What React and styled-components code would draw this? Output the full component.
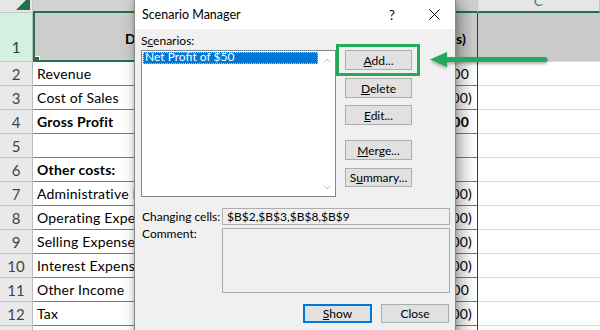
import styled, { createGlobalStyle } from "styled-components";

const GREEN = "#217346";
const ARROW = "#25a85a";

const GlobalStyle = createGlobalStyle`
  html, body { margin: 0; padding: 0; background: #fff; }
  body { width: 600px; height: 330px; overflow: hidden; }
`;

const Page = styled.div`
  position: relative;
  width: 600px;
  height: 330px;
  overflow: hidden;
  font-family: Lato, "Liberation Sans", sans-serif;
`;

const Sheet = styled.div`
  display: flex;
  flex-direction: column;
  margin-top: -8px;
`;

const Row = styled.div`
  display: grid;
  grid-template-columns: 33px 267px 178px 1fr;
  height: ${(p) => p.$h}px;
`;

const Corner = styled.div`
  background: #e6e6e6;
  border-right: 1px solid #c6c6c6;
  border-bottom: 1px solid #c6c6c6;
  box-sizing: border-box;
  position: relative;
  svg { position: absolute; left: 0; top: 0; }
`;

const ColHead = styled.div`
  box-sizing: border-box;
  background: ${(p) => (p.$selected ? "#d2d2d2" : "#e6e6e6")};
  border-right: 1px solid #c6c6c6;
  border-bottom: 2px solid ${GREEN};
  text-align: center;
  font-size: 14px;
  line-height: 16px;
  padding-top: 1px;
  color: #3f7f78;
`;

const RowHead = styled.div`
  box-sizing: border-box;
  display: flex;
  justify-content: center;
  align-items: ${(p) => (p.$active ? "flex-end" : "center")};
  padding-bottom: ${(p) => (p.$active ? 5 : 0)}px;
  background: ${(p) => (p.$active ? "#d3f0e0" : "#e9e9e9")};
  border-right: 1px solid #bdbdbd;
  border-bottom: 1px solid #c6c6c6;
  font-size: 15px;
  color: ${(p) => (p.$active ? "#23402f" : "#444")};
`;

const Cell = styled.div`
  box-sizing: border-box;
  position: relative;
  display: flex;
  align-items: center;
  justify-content: ${(p) => p.$justify || "flex-start"};
  padding: ${(p) => p.$pad || "0 4px"};
  white-space: nowrap;
  overflow: hidden;
  background: ${(p) => (p.$head ? "#cdcdcd" : "#fff")};
  border-right: 1px solid ${(p) => (p.$edge ? "#3a3a3a" : "#7a7a7a")};
  border-bottom: ${(p) => (p.$selected ? `2px solid ${GREEN}` : "1px solid #7a7a7a")};
  border-left: ${(p) => (p.$selectLeft ? `2px solid ${GREEN}` : "none")};
  font-size: 14px;
  letter-spacing: 0.2px;
  font-weight: ${(p) => (p.$bold ? 700 : 400)};
  color: #000;
`;

const Handle = styled.span`
  position: absolute;
  left: -2px;
  bottom: -3px;
  width: 5px;
  height: 5px;
  background: ${GREEN};
  border: 1px solid #fff;
`;

const GridCell = styled.div`
  background: ${(p) => (p.$head ? "#cacaca" : "#fff")};
  border-bottom: 1px solid #dadada;
`;

const Dialog = styled.div`
  position: absolute;
  left: 134px;
  top: -1px;
  width: 322px;
  height: 345px;
  box-sizing: border-box;
  border: 1px solid #8a8a8a;
  background: #f0f0f0;
  box-shadow: 5px 3px 16px rgba(0, 0, 0, 0.38), 0 0 5px rgba(0, 0, 0, 0.18);
  font-family: Lato, "Liberation Sans", sans-serif;
  font-size: 12px;
  color: #000;
  display: flex;
  flex-direction: column;
`;

const TitleBar = styled.div`
  height: 29px;
  background: #fff;
  display: flex;
  align-items: center;
  padding-left: 7px;
`;

const Title = styled.div`
  flex: 1;
  font-size: 12.5px;
`;

const TitleButton = styled.div`
  width: 42px;
  height: 29px;
  display: flex;
  align-items: center;
  justify-content: center;
  font-size: 13px;
`;

const Body = styled.div`
  padding: 5px 5px 0 6px;
  display: flex;
  flex-direction: column;
`;

const Top = styled.div`
  display: grid;
  grid-template-columns: 195px 67px;
  column-gap: 9px;
  row-gap: 2px;
`;

const Label = styled.div`
  line-height: 14px;
`;

const Key = styled.span`
  text-decoration: underline;
`;

const ListBox = styled.div`
  height: 147px;
  box-sizing: border-box;
  border: 1px solid #828790;
  background: #fff;
  display: flex;
`;

const ListItems = styled.div`
  flex: 1;
  padding: 1px 0 0 1px;
`;

const ListItem = styled.div`
  height: 12px;
  box-sizing: border-box;
  line-height: 10px;
  padding-left: 2px;
  background: ${(p) => (p.$selected ? "#0078d7" : "transparent")};
  color: ${(p) => (p.$selected ? "#fff" : "#000")};
  outline: ${(p) => (p.$selected ? "1px dotted #9fd0f5" : "none")};
  outline-offset: -1px;
`;

const ScrollBar = styled.div`
  width: 17px;
  display: flex;
  flex-direction: column;
  justify-content: space-between;
  align-items: center;
  padding: 7px 0 6px;
`;

const ButtonColumn = styled.div`
  display: flex;
  flex-direction: column;
`;

const Button = styled.div`
  box-sizing: border-box;
  width: ${(p) => p.$w || 67}px;
  height: ${(p) => p.$h || 20}px;
  margin-top: ${(p) => p.$gap || 0}px;
  background: #e1e1e1;
  border: ${(p) => (p.$default ? "2px solid #0078d7" : "1px solid #adadad")};
  display: flex;
  align-items: center;
  justify-content: center;
  font-size: 12px;
  position: relative;
`;

const Highlight = styled.div`
  position: absolute;
  top: -7px;
  left: -10px;
  right: -9px;
  bottom: -7px;
  border: 3px solid ${ARROW};
`;

const FieldRow = styled.div`
  display: flex;
  align-items: flex-start;
  margin-top: ${(p) => p.$gap}px;
`;

const FieldLabel = styled.div`
  width: 81px;
  padding-left: 1px;
  box-sizing: border-box;
  line-height: ${(p) => p.$lh || 14}px;
`;

const Field = styled.div`
  box-sizing: border-box;
  width: 228px;
  height: ${(p) => p.$h}px;
  border: 1px solid #adadad;
  background: #f0f0f0;
  padding: 0 4px;
  line-height: 15px;
`;

const Footer = styled.div`
  display: flex;
  justify-content: flex-end;
  gap: 9px;
  margin-top: 11px;
  padding-right: 1px;
`;

const Arrow = styled.svg`
  position: absolute;
  left: 424px;
  top: 48px;
`;

const rows = [
  { n: 2, label: "Revenue", value: "100,000" },
  { n: 3, label: "Cost of Sales", value: "(60,000)", neg: true },
  { n: 4, label: "Gross Profit", value: "40,000", bold: true },
  { n: 5 },
  { n: 6, label: "Other costs:", bold: true },
  { n: 7, label: "Administrative Expenses", value: "(5,000)", neg: true },
  { n: 8, label: "Operating Expenses", value: "(8,000)", neg: true },
  { n: 9, label: "Selling Expenses", value: "(4,000)", neg: true },
  { n: 10, label: "Interest Expenses", value: "(2,000)", neg: true },
  { n: 11, label: "Other Income", value: "1,000" },
  { n: 12, label: "Tax", value: "(3,000)", neg: true },
  { n: 13, label: "Net Profit", value: "19,000", bold: true },
];

const Chevron = ({ up }) => (
  <svg width="8" height="5" viewBox="0 0 8 5">
    <path d={up ? "M0.5 4.5 L4 1 L7.5 4.5" : "M0.5 0.5 L4 4 L7.5 0.5"} fill="none" stroke="#c2c2c2" strokeWidth="1" />
  </svg>
);

export default function App() {
  return (
    <Page>
      <GlobalStyle />
      <Sheet>
        <Row $h={21}>
          <Corner>
            <svg width="33" height="21">
              <polygon points="16,18 30,18 30,4" fill={GREEN} />
            </svg>
          </Corner>
          <ColHead $selected />
          <ColHead $selected />
          <ColHead>C</ColHead>
        </Row>
        <Row $h={49}>
          <RowHead $active>1</RowHead>
          <Cell $head $bold $selectLeft $selected $pad="3px 4px 0 90px">
            Description
            <Handle />
          </Cell>
          <Cell $head $bold $edge $selected $justify="flex-end" $pad="3px 11px 0 4px">
            Amount ($s)
          </Cell>
          <GridCell $head />
        </Row>
        {rows.map((r) => (
          <Row $h={24} key={r.n}>
            <RowHead>{r.n}</RowHead>
            <Cell $bold={r.bold}>{r.label}</Cell>
            <Cell $bold={r.bold} $edge $justify="flex-end" $pad={r.neg ? "0 5px 0 4px" : "0 8px 0 4px"}>
              {r.value}
            </Cell>
            <GridCell />
          </Row>
        ))}
      </Sheet>

      <Dialog>
        <TitleBar>
          <Title>Scenario Manager</Title>
          <TitleButton>?</TitleButton>
          <TitleButton>
            <svg width="11" height="11" viewBox="0 0 11 11">
              <path d="M0.5 0.5 L10.5 10.5 M10.5 0.5 L0.5 10.5" stroke="#000" strokeWidth="1" />
            </svg>
          </TitleButton>
        </TitleBar>
        <Body>
          <Top>
            <Label>
              S<Key>c</Key>enarios:
            </Label>
            <div />
            <ListBox>
              <ListItems>
                <ListItem $selected>Net Profit of $50</ListItem>
              </ListItems>
              <ScrollBar>
                <Chevron up />
                <Chevron />
              </ScrollBar>
            </ListBox>
            <ButtonColumn>
              <Button>
                <span>
                  <Key>A</Key>dd...
                </span>
                <Highlight />
              </Button>
              <Button $gap={8}>
                <span>
                  <Key>D</Key>elete
                </span>
              </Button>
              <Button $gap={7}>
                <span>
                  <Key>E</Key>dit...
                </span>
              </Button>
              <Button $gap={15}>
                <span>
                  <Key>M</Key>erge...
                </span>
              </Button>
              <Button $gap={8} $h={19}>
                <span>
                  S<Key>u</Key>mmary...
                </span>
              </Button>
            </ButtonColumn>
          </Top>
          <FieldRow $gap={11}>
            <FieldLabel $lh={17}>Changing cells:</FieldLabel>
            <Field $h={17}>$B$2,$B$3,$B$8,$B$9</Field>
          </FieldRow>
          <FieldRow $gap={3}>
            <FieldLabel $lh={12}>Comment:</FieldLabel>
            <Field $h={65} />
          </FieldRow>
          <Footer>
            <Button $default $w={69} $h={19}>
              <span>
                <Key>S</Key>how
              </span>
            </Button>
            <Button $w={68} $h={19}>
              Close
            </Button>
          </Footer>
        </Body>
      </Dialog>

      <Arrow width="130" height="26" viewBox="0 0 130 26">
        <defs>
          <filter id="arrowShadow" x="-10%" y="-50%" width="120%" height="200%">
            <feDropShadow dx="0" dy="2" stdDeviation="1.5" floodColor="#000" floodOpacity="0.3" />
          </filter>
        </defs>
        <g filter="url(#arrowShadow)">
          <polygon points="6,11.5 23,4 23,19" fill={ARROW} />
          <line x1="21" y1="11.5" x2="121" y2="11.5" stroke={ARROW} strokeWidth="5" strokeLinecap="round" />
        </g>
      </Arrow>
    </Page>
  );
}
